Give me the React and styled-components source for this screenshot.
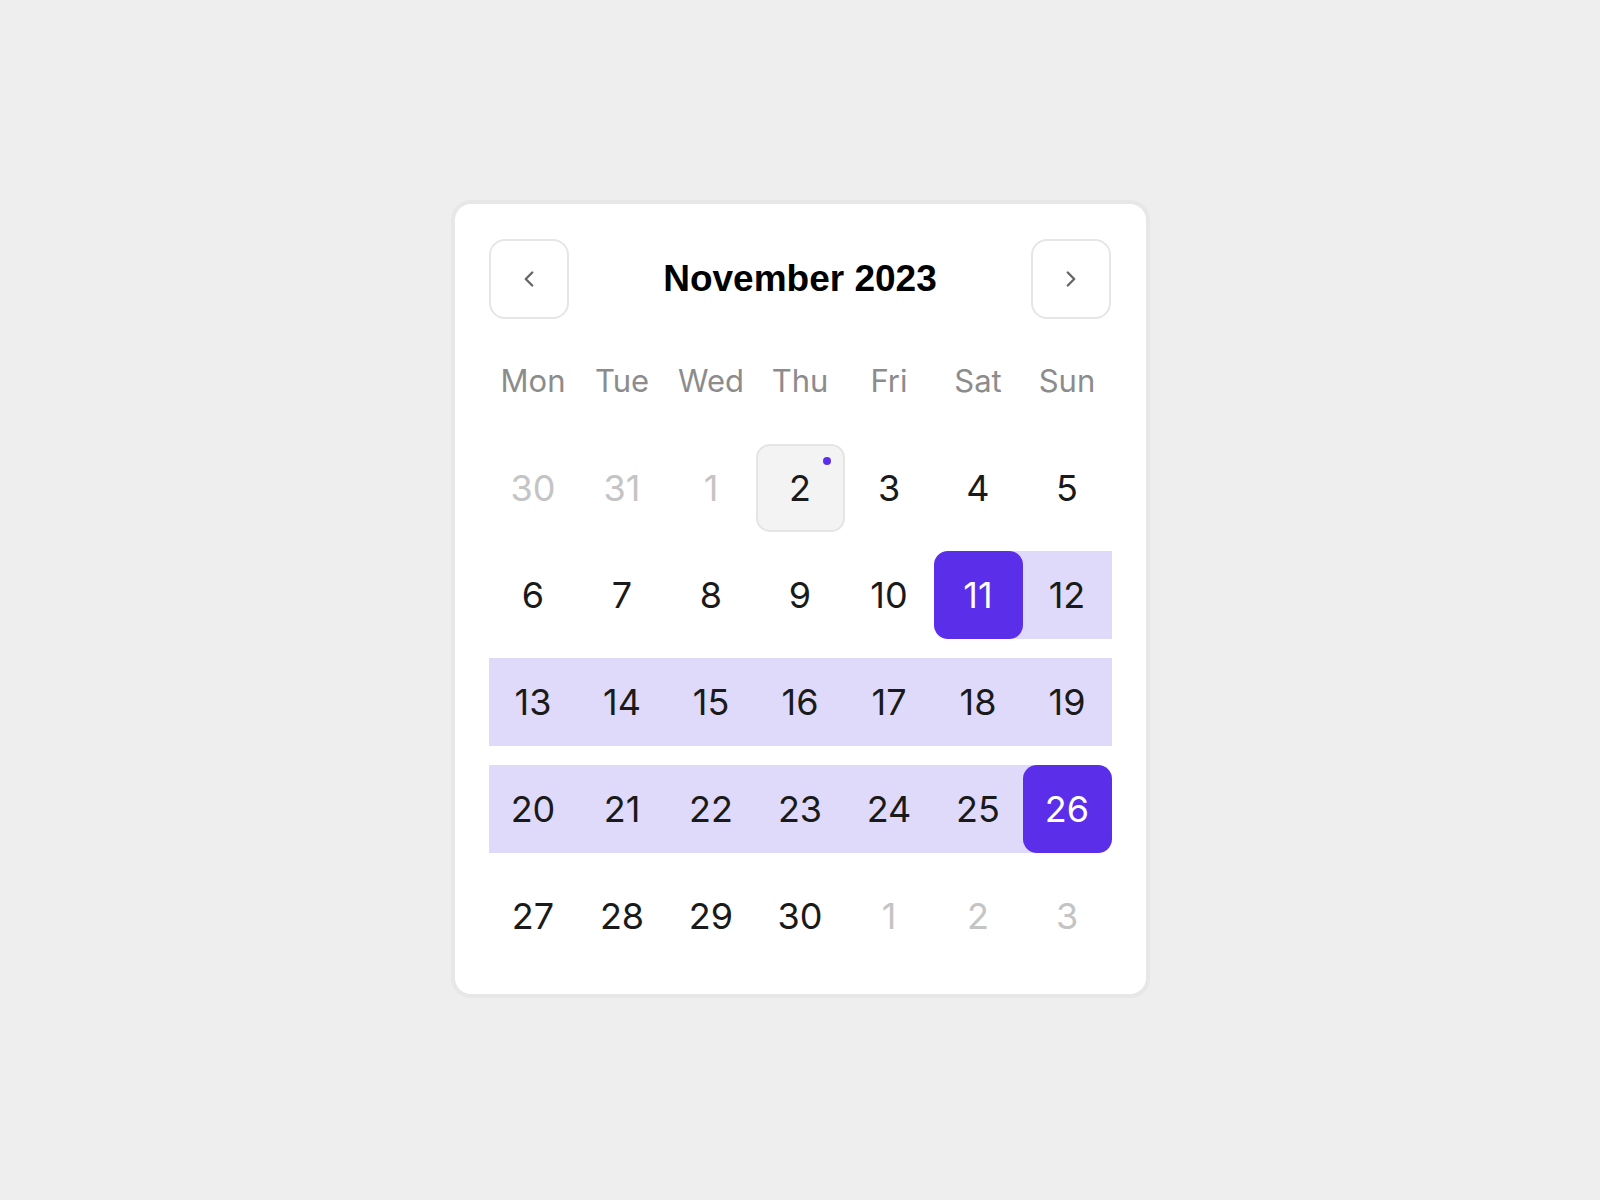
import React from 'react';
import styled, { createGlobalStyle } from 'styled-components';
import { ChevronLeft, ChevronRight } from 'lucide-react';

const GlobalStyle = createGlobalStyle`
  html, body {
    margin: 0;
    padding: 0;
    background: #eeeeee;
    font-family: Inter, "Noto Sans", sans-serif;
  }
`;

const weekdays = ['Mon', 'Tue', 'Wed', 'Thu', 'Fri', 'Sat', 'Sun'];

// November 2023, Monday first, with the spill-over days of Oct and Dec
const weeks = [
  [30, 31, 1, 2, 3, 4, 5],
  [6, 7, 8, 9, 10, 11, 12],
  [13, 14, 15, 16, 17, 18, 19],
  [20, 21, 22, 23, 24, 25, 26],
  [27, 28, 29, 30, 1, 2, 3],
];

const TODAY = 2;
const RANGE_START = 11;
const RANGE_END = 26;

const getDayInfo = (day, weekIndex) => {
  const otherMonth = (weekIndex === 0 && day > 20) || (weekIndex === 4 && day < 10);
  // days before today can't be picked
  const past = weekIndex === 0 && day < TODAY;
  if (otherMonth || past) return { muted: true };
  return {
    today: day === TODAY,
    selected: day === RANGE_START || day === RANGE_END,
    band:
      day === RANGE_START ? 'start'
        : day === RANGE_END ? 'end'
        : day > RANGE_START && day < RANGE_END ? 'mid'
        : null,
  };
};

const Calendar = () => {
  return (
    <Page>
      <GlobalStyle />
      <Card>
        <Header>
          <NavButton aria-label="Previous month">
            <ChevronLeft size={26} strokeWidth={2.2} />
          </NavButton>
          <Title>November 2023</Title>
          <NavButton aria-label="Next month">
            <ChevronRight size={26} strokeWidth={2.2} />
          </NavButton>
        </Header>

        <WeekdayRow>
          {weekdays.map(d => (
            <Weekday key={d}>{d}</Weekday>
          ))}
        </WeekdayRow>

        <Weeks>
          {weeks.map((week, wi) => (
            <WeekRow key={wi}>
              {week.map((day, di) => {
                const info = getDayInfo(day, wi);
                return (
                  <Cell key={di} $band={info.band}>
                    <Day
                      $muted={info.muted}
                      $today={info.today}
                      $selected={info.selected}
                    >
                      {day}
                      {info.today && <TodayDot />}
                    </Day>
                  </Cell>
                );
              })}
            </WeekRow>
          ))}
        </Weeks>
      </Card>
    </Page>
  );
};

const RANGE_BG = '#e0dafa';

const Page = styled.div`
  min-height: 1200px;
  display: flex;
  justify-content: center;
  align-items: flex-start;
  padding-top: 204px;
  box-sizing: border-box;
`;

const Card = styled.div`
  width: 691px;
  box-sizing: border-box;
  padding: 35px 34px 34px;
  background: #ffffff;
  border-radius: 16px;
  box-shadow: 0 0 0 4px #e7e7e7;
`;

const Header = styled.div`
  display: flex;
  align-items: center;
  justify-content: space-between;
  height: 80px;
`;

const NavButton = styled.button`
  width: 80px;
  height: 80px;
  box-sizing: border-box;
  display: flex;
  align-items: center;
  justify-content: center;
  background: #ffffff;
  border: 2px solid #e6e6e6;
  border-radius: 16px;
  color: #666666;
  cursor: pointer;
  padding: 0;
`;

const Title = styled.h2`
  margin: 0;
  font-family: "Liberation Sans", Arial, sans-serif;
  font-size: 37px;
  font-weight: 700;
  color: #000000;
`;

const WeekdayRow = styled.div`
  display: grid;
  grid-template-columns: repeat(7, 1fr);
  height: 36px;
  margin-top: 43px;
`;

const Weekday = styled.div`
  display: flex;
  align-items: center;
  justify-content: center;
  font-size: 31px;
  color: #8c8c8c;
`;

const Weeks = styled.div`
  display: flex;
  flex-direction: column;
  gap: 19px;
  margin-top: 46px;
`;

const WeekRow = styled.div`
  display: grid;
  grid-template-columns: repeat(7, 1fr);
  height: 88px;
`;

const Cell = styled.div`
  display: flex;
  background: ${({ $band }) =>
    $band === 'mid' ? RANGE_BG
      : $band === 'start' ? `linear-gradient(to right, transparent 50%, ${RANGE_BG} 50%)`
      : $band === 'end' ? `linear-gradient(to right, ${RANGE_BG} 50%, transparent 50%)`
      : 'transparent'};
`;

const Day = styled.div`
  position: relative;
  flex: 1;
  display: flex;
  align-items: center;
  justify-content: center;
  box-sizing: border-box;
  border-radius: 14px;
  font-size: 36px;
  font-weight: 400;
  color: ${({ $muted, $selected }) =>
    $selected ? '#ffffff' : $muted ? '#c4c4c4' : '#1a1a1a'};
  background: ${({ $selected, $today }) =>
    $selected ? '#5b2ee9' : $today ? '#f3f3f3' : 'transparent'};
  border: ${({ $today }) => ($today ? '2px solid #e5e5e5' : 'none')};
`;

const TodayDot = styled.span`
  position: absolute;
  top: 11px;
  right: 12px;
  width: 8px;
  height: 8px;
  border-radius: 50%;
  background: #5b2ee9;
`;

export default Calendar;
